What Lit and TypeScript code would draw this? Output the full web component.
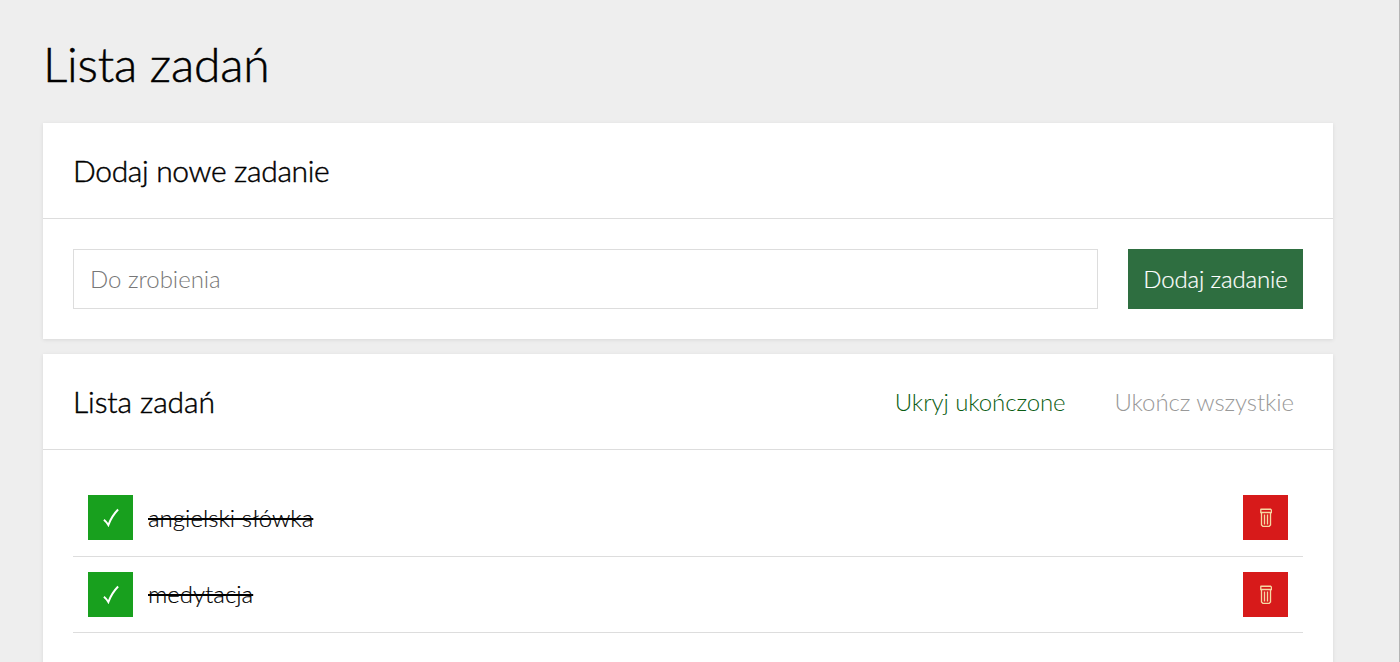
import { LitElement, html, css } from "lit";
import { customElement } from "lit/decorators.js";

@customElement("app-root")
export class AppRoot extends LitElement {
  static styles = css`
    :host { display: block; height: 662px; overflow: hidden; background: #eee; font-family: Lato, sans-serif; font-weight: 300; color: #000; }
    .page { box-sizing: border-box; width: 1400px; height: 662px; padding: 0 66px 0 43px; border-right: 1px solid #b4b4b4; overflow: hidden; }
    h1 { margin: 0 0 35px; padding: 35px 0 0 0; font-size: 48px; font-weight: 300; line-height: 58px; height: 88px; letter-spacing: -0.2px; box-sizing: border-box; -webkit-text-stroke: 0.5px #000; }
    .card { background: #fff; box-shadow: 0 1px 4px rgba(0,0,0,.09); margin-bottom: 15px; }
    .head { display: flex; align-items: center; justify-content: space-between; height: 95px; padding: 0 30px; border-bottom: 1px solid #ddd; }
    h2 { margin: 0 0 2px; font-size: 30px; font-weight: 300; letter-spacing: -0.1px; -webkit-text-stroke: 0.45px #000; }
    h2.tight { letter-spacing: -0.34px; }
    .body { display: flex; gap: 30px; padding: 30px; }
    .input { flex: 1; border: 1px solid #ddd; display: flex; align-items: center; padding: 0 0 2px 16px; height: 56px; font-size: 24px; color: #777; letter-spacing: -0.03px; }
    .btn { height: 60px; width: 175px; background: #2e6e40; color: #fff; font-size: 24px; letter-spacing: -0.15px; padding-bottom: 2px; box-sizing: border-box; display: flex; align-items: center; justify-content: center; -webkit-text-stroke: 0.2px #fff; }
    .links { display: flex; gap: 49px; font-size: 24px; padding-right: 9px; letter-spacing: -0.1px; }
    .l1 { color: #0b5d14; } .l2 { color: #999; }
    .list { padding: 30px 30px 60px; }
    .row { display: flex; align-items: center; justify-content: space-between; padding: 15px; height: 45px; border-bottom: 1px solid #ddd; }
    .row:first-child { padding-bottom: 16px; }
    .left { display: flex; align-items: center; gap: 15px; font-size: 24px; }
    .check, .del { width: 45px; height: 45px; display: flex; align-items: center; justify-content: center; }
    .check { background: #18a01e; }
    .del { background: #d71a1a; }
    s { text-decoration: line-through; text-decoration-thickness: 2px; padding-bottom: 2px; -webkit-text-stroke: 0.15px #000; }
    .row:first-child s { padding-bottom: 0; }
  `;
  render() {
    const rows = ["angielski słówka", "medytacja"];
    return html`<div class="page">
      <h1>Lista zadań</h1>
      <div class="card">
        <div class="head"><h2 class="tight">Dodaj nowe zadanie</h2></div>
        <div class="body"><div class="input">Do zrobienia</div><div class="btn">Dodaj zadanie</div></div>
      </div>
      <div class="card">
        <div class="head"><h2>Lista zadań</h2><div class="links"><span class="l1">Ukryj ukończone</span><span class="l2">Ukończ wszystkie</span></div></div>
        <div class="list">
          ${rows.map(r => html`<div class="row"><div class="left"><div class="check"><svg width="16" height="19" viewBox="0 0 18 20" fill="none" stroke="#fff" stroke-width="2.2"><path d="M1 12.5 C3 14 4.5 16 6 18.5 C8.5 12 12 6 17 1"/></svg></div><s>${r}</s></div>
            <div class="del"><svg width="12" height="19" viewBox="0 0 12 19" fill="none" stroke="#f6d9a4" stroke-width="1.35"><path d="M1 1.2h9.5l1 1v2.3H.8V1.5zM1.5 4.5v12.5l1.5 1.5h6L10.5 17V4.5M4.5 6.5v10M7.5 6.5v10"/></svg></div></div>`)}
        </div>
      </div>
    </div>`;
  }
}
